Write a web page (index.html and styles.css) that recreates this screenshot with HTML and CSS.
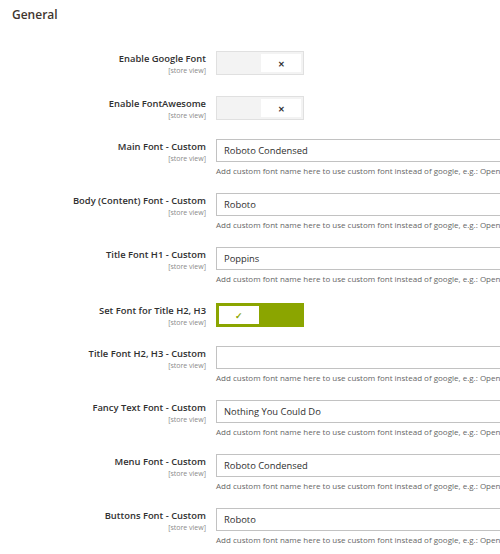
FILE: index.html
```html
<!DOCTYPE html>
<html lang="en">
<head>
    <meta charset="UTF-8">
    <title>General</title>
    <link rel="stylesheet" href="styles.css">
</head>
<body>
<div class="section">
    <h3 class="title">General</h3>
    <div class="fields">
        <div class="row row-toggle">
            <div class="label"><span>Enable Google Font</span><i>[store view]</i></div>
            <div class="control"><span class="toggle"><span class="knob">&#x2715;</span></span></div>
        </div>
        <div class="row row-toggle">
            <div class="label"><span>Enable FontAwesome</span><i>[store view]</i></div>
            <div class="control"><span class="toggle"><span class="knob">&#x2715;</span></span></div>
        </div>
        <div class="row">
            <div class="label"><span>Main Font - Custom</span><i>[store view]</i></div>
            <div class="control">
                <input class="text" type="text" value="Roboto Condensed">
                <p class="note">Add custom font name here to use custom font instead of google, e.g.: Open</p>
            </div>
        </div>
        <div class="row">
            <div class="label"><span>Body (Content) Font - Custom</span><i>[store view]</i></div>
            <div class="control">
                <input class="text" type="text" value="Roboto">
                <p class="note">Add custom font name here to use custom font instead of google, e.g.: Open</p>
            </div>
        </div>
        <div class="row">
            <div class="label"><span>Title Font H1 - Custom</span><i>[store view]</i></div>
            <div class="control">
                <input class="text" type="text" value="Poppins">
                <p class="note">Add custom font name here to use custom font instead of google, e.g.: Open</p>
            </div>
        </div>
        <div class="row row-toggle">
            <div class="label"><span>Set Font for Title H2, H3</span><i>[store view]</i></div>
            <div class="control"><span class="toggle on"><span class="knob">&#x2713;</span></span></div>
        </div>
        <div class="row">
            <div class="label"><span>Title Font H2, H3 - Custom</span><i>[store view]</i></div>
            <div class="control">
                <input class="text" type="text" value="">
                <p class="note">Add custom font name here to use custom font instead of google, e.g.: Open</p>
            </div>
        </div>
        <div class="row">
            <div class="label"><span>Fancy Text Font - Custom</span><i>[store view]</i></div>
            <div class="control">
                <input class="text" type="text" value="Nothing You Could Do">
                <p class="note">Add custom font name here to use custom font instead of google, e.g.: Open</p>
            </div>
        </div>
        <div class="row">
            <div class="label"><span>Menu Font - Custom</span><i>[store view]</i></div>
            <div class="control">
                <input class="text" type="text" value="Roboto Condensed">
                <p class="note">Add custom font name here to use custom font instead of google, e.g.: Open</p>
            </div>
        </div>
        <div class="row">
            <div class="label"><span>Buttons Font - Custom</span><i>[store view]</i></div>
            <div class="control">
                <input class="text" type="text" value="Roboto">
                <p class="note">Add custom font name here to use custom font instead of google, e.g.: Open</p>
            </div>
        </div>
    </div>
</div>
</body>
</html>
```

FILE: styles.css
```css
*{
    margin: 0;
    padding: 0;
    box-sizing: border-box;
}
html,body{
    background: #fff;
    overflow: hidden;
}
body{
    font-family: "Open Sans", "Liberation Sans", sans-serif;
    color: #303030;
    width: 500px;
}
/*标题*/
.title{
    font-size: 12px;
    font-weight: 600;
    color: #41362f;
    line-height: 16px;
    padding: 7px 0 0 12px;
}
.fields{
    display: flex;
    flex-direction: column;
    padding-top: 26px;
}
/*每一行*/
.row{
    display: flex;
    margin-bottom: 16px;
}
.row-toggle{
    margin-top: 2px;
    margin-bottom: 19px;
}
.label{
    width: 216px;
    flex-shrink: 0;
    padding-right: 10px;
    text-align: right;
    display: flex;
    flex-direction: column;
    align-items: flex-end;
}
.label span{
    font-size: 9.4px;
    font-weight: 600;
    line-height: 14px;
    padding-top: 1px;
}
.label i{
    font-style: normal;
    font-size: 7px;
    color: #8a8a8a;
    line-height: 9px;
}
.control{
    width: 420px;
    flex-shrink: 0;
}
/*输入框*/
.text{
    display: block;
    width: 100%;
    height: 23px;
    border: 1px solid #c2c2c2;
    padding: 0 7px;
    font-family: inherit;
    font-size: 9.4px;
    color: #303030;
    outline: none;
}
.note{
    font-size: 8px;
    color: #666;
    line-height: 12px;
    margin-top: 3px;
    white-space: nowrap;
}
/*开关*/
.toggle{
    display: flex;
    justify-content: flex-end;
    width: 88px;
    height: 24px;
    padding: 2px;
    background: #f3f3f3;
    border: 1px solid #e0e0e0;
}
.knob{
    display: flex;
    align-items: center;
    justify-content: center;
    width: 40px;
    height: 100%;
    background: #fff;
    font-size: 8px;
    font-weight: 700;
    color: #333;
}
.toggle.on{
    justify-content: flex-start;
    background: #8ba500;
    border-color: #8ba500;
}
.toggle.on .knob{
    color: #8ba500;
    font-size: 9px;
}
```
